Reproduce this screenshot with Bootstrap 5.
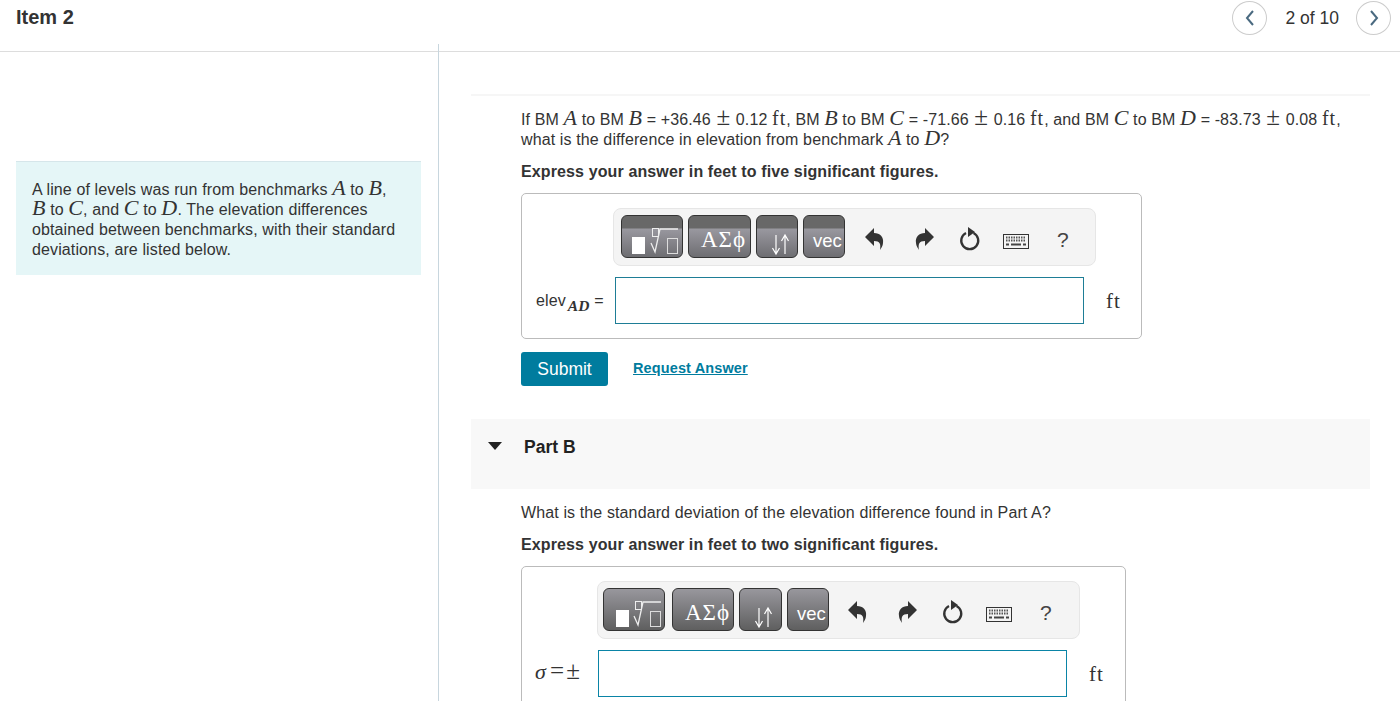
<!DOCTYPE html>
<html lang="en">
<head>
    <meta charset="UTF-8">
    <title>Item 2</title>
    <link href="https://cdn.jsdelivr.net/npm/bootstrap@5.3.0/dist/css/bootstrap.min.css" rel="stylesheet">
    <style>
        html, body { height: 701px; overflow: hidden; }
        body { font-family: "Liberation Sans", Arial, sans-serif; font-size: 16px; line-height: 20px; letter-spacing: .12px; color: #333; background: #fff; }
        .top-bar { height: 52px; border-bottom: 1px solid #ddd; padding: 7px 9px 0 16px; }
        .item-title { font-size: 20px; font-weight: 700; line-height: 20px; letter-spacing: 0; }
        .pager-btn { width: 35px; height: 34px; border: 1px solid #ccc; border-radius: 50%; background: #fff; margin-top: -6px; }
        .pager-text { margin: 0 17px 0 18px; font-size: 17.5px; line-height: 22px; letter-spacing: 0; }
        .main-wrap { margin-top: -8px; height: 660px; }
        .left-pane { width: 439px; flex: none; border-right: 1px solid #c8d6de; padding: 117px 17px 0 16px; }
        .intro-box { background: #e5f6f7; border-top: 1px solid #d6e6ea; padding: 18px 16px 15px; height: 114px; }
        .right-pane { width: 931px; flex: none; padding: 50px 0 0 32px; }
        .top-rule { height: 2px; background: #f6f6f6; }
        .q-block { padding-left: 50px; }
        .q-text { margin: 14px 0 12px; }
        .q-plain { margin: 14px 0 12px; }
        .q-bold { font-weight: 700; margin: 0 0 11px; }
        .mv { font-family: "Liberation Serif", serif; font-style: italic; font-size: 22px; line-height: 0; }
        .mu { font-family: "Liberation Serif", serif; font-size: 20px; line-height: 0; letter-spacing: 1px; }
        .pm { font-family: "Liberation Serif", serif; font-size: 25px; line-height: 0; padding: 0 1px; }
        .eq-sign { font-family: "Liberation Serif", serif; font-size: 25px; line-height: 0; margin: 0 1px 0 4px; }
        .answer-box { border: 1px solid #bbb; border-radius: 5px; padding: 14px 0; }
        .answer-a { width: 621px; }
        .answer-b { width: 605px; }
        .tool-wrap { height: 58px; width: 483px; background: #f4f4f4; border: 1px solid #e6e6e6; border-radius: 8px; padding: 6px 0 0 7px; }
        .tool-a { margin-left: 91px; }
        .tool-b { margin-left: 75px; padding-left: 5px; }
        .tb-btn { height: 43px; border: 1px solid #333; border-radius: 6px; color: #fff; margin-right: 5px; flex: none; letter-spacing: 0; }
        .tool-a .tb-btn { background: linear-gradient(#686868 0, #686868 12px, #99989f 13px, #6e6e72 100%); }
        .tool-b .tb-btn { background: linear-gradient(#98979d, #5f5f5f); }
        .w-tpl { width: 62px; }
        .tool-b .w-tpl { margin-right: 7px; }
        .w-sym { width: 63px; font-family: "Liberation Serif", serif; font-size: 23px; letter-spacing: 1px; padding: 12px 0 0 12px; line-height: 24px; }
        .tool-b .w-sym { width: 62px; }
        .w-arr { width: 42px; }
        .tool-b .w-arr { width: 43px; }
        .w-vec { width: 42px; font-size: 18.5px; padding: 15px 0 0 9px; line-height: 20px; overflow: hidden; }
        .tool-ic { flex: none; }
        .ic-undo { margin: 13px 0 0 15px; }
        .tool-b .ic-undo { margin-left: 14px; }
        .ic-redo { margin: 13px 0 0 29px; }
        .ic-reset { margin: 12px 0 0 25px; }
        .ic-keys { margin: 19px 0 0 22px; }
        .help-mark { font-size: 21px; color: #444; line-height: 20px; margin: 15px 0 0 28px; }
        .input-row { margin-top: 11px; height: 47px; }
        .answer-input { height: 47px; width: 469px; border: 1px solid #1e7d96; background: #fff; flex: none; }
        .input-focus { border-color: #0a84a6; }
        .lbl-a { width: 93px; padding-left: 14px; white-space: nowrap; }
        .lbl-b { width: 76px; padding-left: 13px; white-space: nowrap; }
        .sub-ad { font-family: "Liberation Serif", serif; font-style: italic; font-weight: 700; font-size: 15.5px; line-height: 0; position: relative; top: 5px; margin-left: 2px; }
        .unit-lbl { font-family: "Liberation Serif", serif; font-size: 21px; letter-spacing: 1px; margin-left: 22px; }
        .submit-btn { background: #007c9e; color: #fff; border: 0; border-radius: 3px; width: 87px; height: 34px; font-size: 17.5px; letter-spacing: 0; padding: 0; margin-top: 13px; }
        .req-link { color: #007c9e; font-size: 14.5px; font-weight: 700; margin: 11px 0 0 25px; }
        .part-band { height: 70px; background: #f8f8f8; margin: 33px 0 0; padding: 18px 0 0 17px; }
        .part-arrow { width: 0; height: 0; border-left: 7px solid transparent; border-right: 7px solid transparent; border-top: 8px solid #222; margin: 5px 22px 0 0; }
        .part-name { font-size: 17.5px; font-weight: 700; color: #222; letter-spacing: 0; }
    </style>
</head>
<body>
    <div class="top-bar d-flex justify-content-between">
        <div class="item-title">Item 2</div>
        <div class="d-flex align-items-start">
            <div class="pager-btn d-flex align-items-center justify-content-center">
                <svg width="12" height="18" viewBox="0 0 12 18"><path d="M9 2 L3 9 L9 16" fill="none" stroke="#4a6a80" stroke-width="2"/></svg>
            </div>
            <div class="pager-text">2 of 10</div>
            <div class="pager-btn d-flex align-items-center justify-content-center">
                <svg width="12" height="18" viewBox="0 0 12 18"><path d="M3 2 L9 9 L3 16" fill="none" stroke="#4a6a80" stroke-width="2"/></svg>
            </div>
        </div>
    </div>

    <div class="main-wrap d-flex">
        <div class="left-pane">
            <div class="intro-box">A line of levels was run from benchmarks <span class="mv">A</span> to <span class="mv">B</span>,<br><span class="mv">B</span> to <span class="mv">C</span>, and <span class="mv">C</span> to <span class="mv">D</span>. The elevation differences obtained between benchmarks, with their standard deviations, are listed below.</div>
        </div>
        <div class="right-pane">
            <div class="top-rule"></div>
            <div class="q-block">
                <p class="q-text">If BM <span class="mv">A</span> to BM <span class="mv">B</span> = +36.46 <span class="pm">±</span> 0.12 <span class="mu">ft</span>, BM <span class="mv">B</span> to BM <span class="mv">C</span> = -71.66 <span class="pm">±</span> 0.16 <span class="mu">ft</span>, and BM <span class="mv">C</span> to BM <span class="mv">D</span> = -83.73 <span class="pm">±</span> 0.08 <span class="mu">ft</span>,<br>what is the difference in elevation from benchmark <span class="mv">A</span> to <span class="mv">D</span>?</p>
                <p class="q-bold">Express your answer in feet to five significant figures.</p>
                <div class="answer-box answer-a">
                    <div class="tool-wrap tool-a d-flex">
                        <div class="tb-btn w-tpl">
                            <svg width="60" height="41" viewBox="0 0 60 41"><rect x="10" y="21" width="13" height="17" fill="#fff"/><rect x="30.5" y="12.5" width="6" height="8" fill="none" stroke="#eee"/><path d="M29 27 L33 36 L38 13 H56" fill="none" stroke="#eee" stroke-width="1.3"/><rect x="45.5" y="22.5" width="10" height="15" fill="none" stroke="#ddd"/></svg>
                        </div>
                        <div class="tb-btn w-sym">ΑΣϕ</div>
                        <div class="tb-btn w-arr">
                            <svg width="40" height="41" viewBox="0 0 40 41"><path d="M19 19 V37 M15.5 32 L19 38 L22.5 32 M28 38 V20 M24.5 25 L28 19 L31.5 25" fill="none" stroke="#fff" stroke-width="1.2"/></svg>
                        </div>
                        <div class="tb-btn w-vec">vec</div>
                        <svg class="tool-ic ic-undo" width="20" height="22" viewBox="0 0 20 22"><path d="M0 9 L9 0 V5 C15 5 19 9 18 15 C18 18 16 20 15 22 C16 16 15 13 9 13 V18 Z" fill="#333"/></svg>
                        <svg class="tool-ic ic-redo" width="20" height="22" viewBox="0 0 20 22"><path d="M20 9 L11 0 V5 C5 5 1 9 2 15 C2 18 4 20 5 22 C4 16 5 13 11 13 V18 Z" fill="#333"/></svg>
                        <svg class="tool-ic ic-reset" width="22" height="24" viewBox="0 0 22 24"><path d="M14.5 6 A8.5 8.5 0 1 1 7 6" fill="none" stroke="#333" stroke-width="2.3"/><path d="M9 0 L16 5 L9 10 Z" fill="#333"/></svg>
                        <svg class="tool-ic ic-keys" width="26" height="15" viewBox="0 0 26 15"><rect x=".5" y=".5" width="25" height="14" fill="#f4f4f4" stroke="#333"/><path d="M3 3.5 H23 M3 6.5 H23" stroke="#555" stroke-width="2" stroke-dasharray="1.5 1"/><path d="M3 10.5 H6 M8 10.5 H18 M20 10.5 H23" stroke="#444" stroke-width="2"/></svg>
                        <div class="help-mark tool-ic">?</div>
                    </div>
                    <div class="input-row d-flex align-items-center">
                        <div class="lbl-a">elev<span class="sub-ad">AD</span> =</div>
                        <div class="answer-input"></div>
                        <div class="unit-lbl">ft</div>
                    </div>
                </div>
                <div class="d-flex align-items-center">
                    <button class="submit-btn">Submit</button>
                    <a href="#" class="req-link">Request Answer</a>
                </div>
            </div>
            <div class="part-band d-flex">
                <div class="part-arrow"></div>
                <div class="part-name">Part B</div>
            </div>
            <div class="q-block">
                <p class="q-plain">What is the standard deviation of the elevation difference found in Part A?</p>
                <p class="q-bold">Express your answer in feet to two significant figures.</p>
                <div class="answer-box answer-b">
                    <div class="tool-wrap tool-b d-flex">
                        <div class="tb-btn w-tpl">
                            <svg width="60" height="41" viewBox="0 0 60 41"><rect x="12" y="21" width="13" height="17" fill="#fff"/><rect x="31.5" y="12.5" width="6" height="8" fill="none" stroke="#eee"/><path d="M30 27 L34 36 L39 13 H57" fill="none" stroke="#eee" stroke-width="1.3"/><rect x="46.5" y="22.5" width="10" height="15" fill="none" stroke="#ddd"/></svg>
                        </div>
                        <div class="tb-btn w-sym">ΑΣϕ</div>
                        <div class="tb-btn w-arr">
                            <svg width="40" height="41" viewBox="0 0 40 41"><path d="M19 19 V37 M15.5 32 L19 38 L22.5 32 M28 38 V20 M24.5 25 L28 19 L31.5 25" fill="none" stroke="#fff" stroke-width="1.2"/></svg>
                        </div>
                        <div class="tb-btn w-vec">vec</div>
                        <svg class="tool-ic ic-undo" width="20" height="22" viewBox="0 0 20 22"><path d="M0 9 L9 0 V5 C15 5 19 9 18 15 C18 18 16 20 15 22 C16 16 15 13 9 13 V18 Z" fill="#333"/></svg>
                        <svg class="tool-ic ic-redo" width="20" height="22" viewBox="0 0 20 22"><path d="M20 9 L11 0 V5 C5 5 1 9 2 15 C2 18 4 20 5 22 C4 16 5 13 11 13 V18 Z" fill="#333"/></svg>
                        <svg class="tool-ic ic-reset" width="22" height="24" viewBox="0 0 22 24"><path d="M14.5 6 A8.5 8.5 0 1 1 7 6" fill="none" stroke="#333" stroke-width="2.3"/><path d="M9 0 L16 5 L9 10 Z" fill="#333"/></svg>
                        <svg class="tool-ic ic-keys" width="26" height="15" viewBox="0 0 26 15"><rect x=".5" y=".5" width="25" height="14" fill="#f4f4f4" stroke="#333"/><path d="M3 3.5 H23 M3 6.5 H23" stroke="#555" stroke-width="2" stroke-dasharray="1.5 1"/><path d="M3 10.5 H6 M8 10.5 H18 M20 10.5 H23" stroke="#444" stroke-width="2"/></svg>
                        <div class="help-mark tool-ic">?</div>
                    </div>
                    <div class="input-row d-flex align-items-center">
                        <div class="lbl-b"><span class="mv">σ</span><span class="eq-sign">=</span><span class="pm">±</span></div>
                        <div class="answer-input input-focus"></div>
                        <div class="unit-lbl">ft</div>
                    </div>
                </div>
            </div>
        </div>
    </div>

    <script src="https://cdn.jsdelivr.net/npm/bootstrap@5.3.0/dist/js/bootstrap.bundle.min.js"></script>
</body>
</html>
